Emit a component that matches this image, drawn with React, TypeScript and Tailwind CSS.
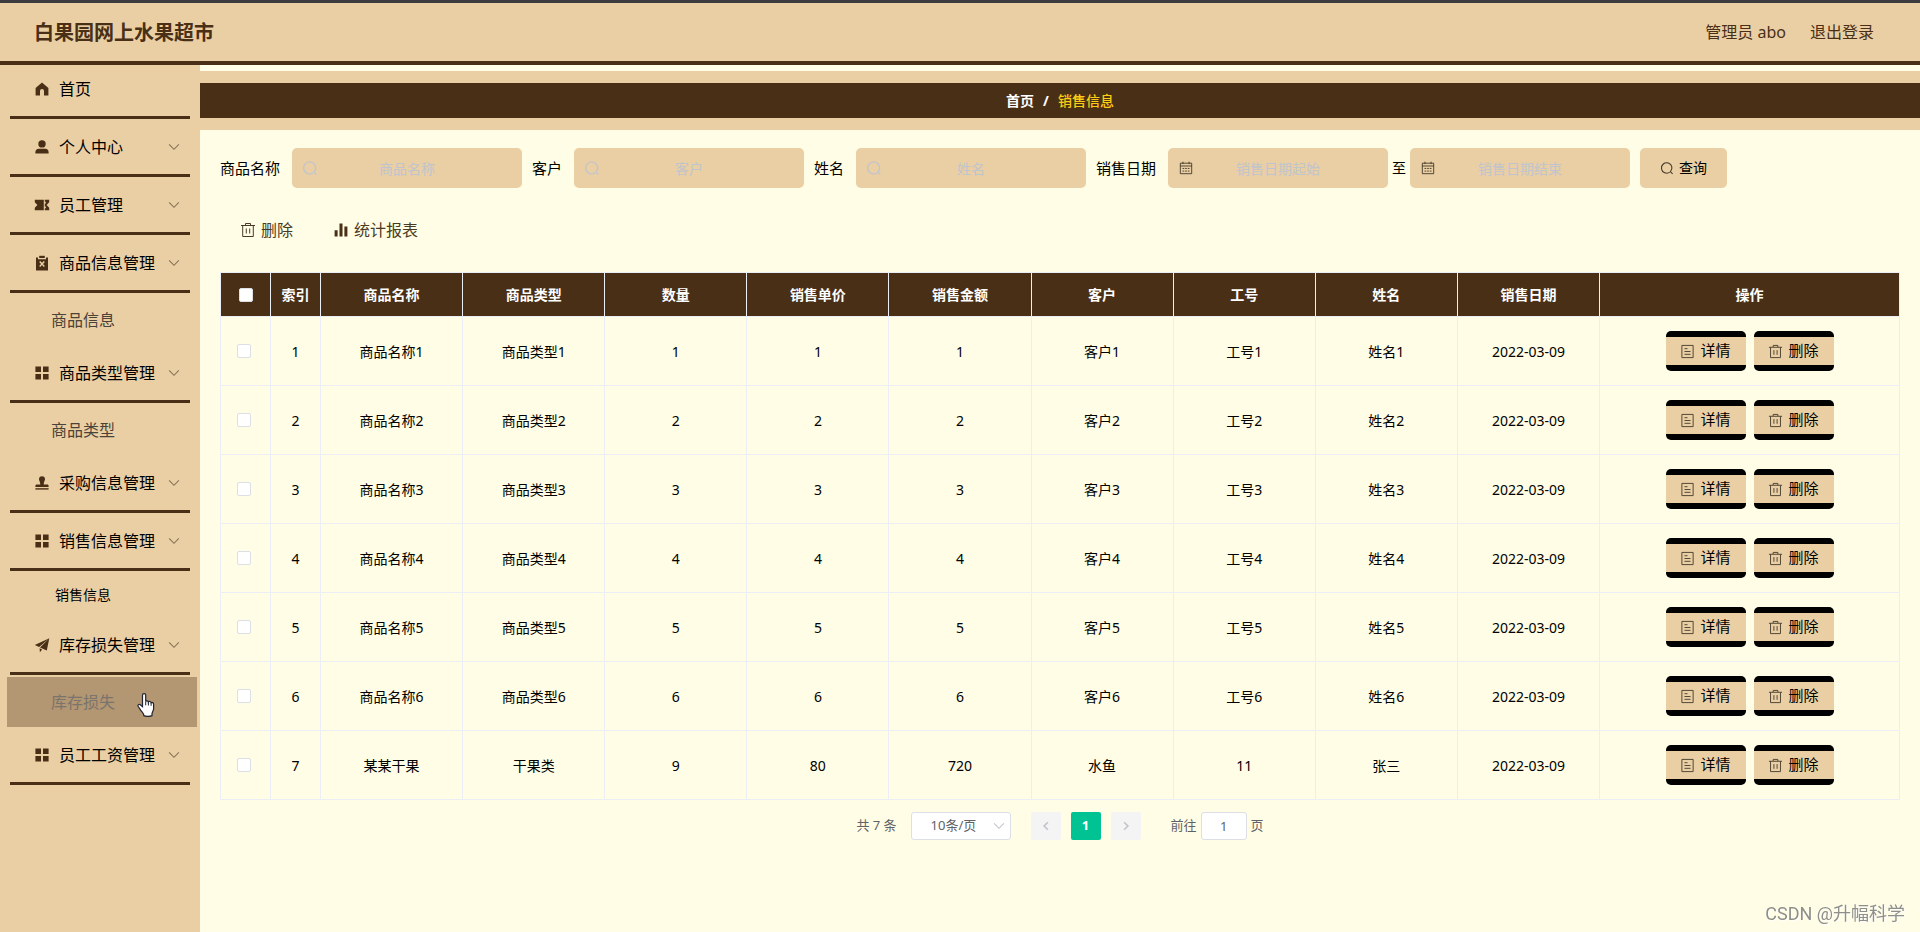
import { useState } from 'react'
import type { ReactNode } from 'react'
import clsx from 'clsx'

type IconProps = { className?: string }

function Icon({ className, children }: IconProps & { children: ReactNode }) {
  return (
    <svg viewBox="0 0 16 16" className={clsx('shrink-0', className)} fill="currentColor" aria-hidden>
      {children}
    </svg>
  )
}

const HomeIcon = (p: IconProps) => (
  <Icon {...p}>
    <path d="M8 1.600 14.400 7v7.400H10V10a2 2 0 0 0-4 0v4.400H1.600V7z" />
  </Icon>
)

const UserIcon = (p: IconProps) => (
  <Icon {...p}>
    <circle cx="8" cy="4.900" r="3.700" />
    <path d="M1.400 14.600v-1.400c0-2 1.300-3.400 3.300-3.400h6.600c2 0 3.300 1.400 3.300 3.400v1.400z" />
  </Icon>
)

const TicketIcon = (p: IconProps) => (
  <Icon {...p}>
    <path d="M.8 2.800h9v10.400h-9v-2.400L3.400 8 .8 5.200zM10.800 2.800h4.400v2.400L12.600 8l2.600 2.800v2.400h-4.400v-2h1V9.400h-1V6.600h1V4.800h-1z" />
  </Icon>
)

const ClaimIcon = (p: IconProps) => (
  <Icon {...p}>
    <path
      fillRule="evenodd"
      d="M2 2.400h2v1.800h8V2.400h2v13H2zM5.200 6.900 7 8.900l-1.800 2 1 1L8 10l1.800 1.900 1-1-1.800-2 1.800-2-1-1L8 7.800 6.200 5.900z"
    />
    <path d="M5.200.8h5.600v2.200H5.200z" />
  </Icon>
)

const MenuIcon = (p: IconProps) => (
  <Icon {...p}>
    <path d="M1.400 1.400h5.600v5.600H1.400zM9 1.400h5.600v5.600H9zM1.400 9H7v5.600H1.400zM9 9h5.600v5.600H9z" />
  </Icon>
)

const CheckStampIcon = (p: IconProps) => (
  <Icon {...p}>
    <path d="M8 1.200a3 3 0 0 1 3 3c0 1.600-1.200 2.600-1.200 4.400v.8h3.400c.8 0 1.400.6 1.400 1.400v1.200H1.400v-1.200c0-.8.6-1.400 1.400-1.400h3.400v-.8C6.200 6.800 5 5.800 5 4.200a3 3 0 0 1 3-3z" />
    <path d="M1.400 13.200h13.200v1.400H1.400z" />
  </Icon>
)

const PromotionIcon = (p: IconProps) => (
  <Icon {...p}>
    <path d="M15.300 1.200.8 7.900l4.300 2zM15.300 1.200 6 10.400l6.800 3.200zM5.600 11.300l2.500 1.200-2.200 2.700z" />
  </Icon>
)

const StatsIcon = (p: IconProps) => (
  <Icon {...p}>
    <path d="M1.600 8.200h3v6.400h-3zM6.500 1.400h3v13.200h-3zM11.400 4.400h3v10.200h-3z" />
  </Icon>
)

const TrashIcon = (p: IconProps) => (
  <Icon {...p}>
    <path d="M1 3.500h14M5.500 3.300V1.500h5v1.800M2.700 3.500v11h10.600v-11M6.300 6.500v5M9.700 6.500v5" fill="none" stroke="currentColor" />
  </Icon>
)

const DocumentIcon = (p: IconProps) => (
  <Icon {...p}>
    <path d="M2 1.500h12v13H2zM4.800 5H8M4.800 8h6.400M4.800 11h6.400" fill="none" stroke="currentColor" />
  </Icon>
)

const SearchIcon = (p: IconProps) => (
  <Icon {...p}>
    <path d="M11.900 12.200a6 6 0 1 0-.7.600M11.600 11.900l2.800 2.700" fill="none" stroke="currentColor" strokeWidth="1.200" />
  </Icon>
)

const CalendarIcon = (p: IconProps) => (
  <Icon {...p}>
    <path d="M1.500 2.500h13v12h-13zM1.500 5.700h13M4.500.8v2.700M11.500.8v2.700" fill="none" stroke="currentColor" />
    <path d="M4 8.500h8M4 11.500h8" fill="none" stroke="currentColor" strokeDasharray="2 1" />
  </Icon>
)

const ChevronDown = (p: IconProps) => (
  <Icon {...p}>
    <path d="m1.500 4.500 6.500 6.500 6.500-6.500" fill="none" stroke="currentColor" strokeWidth="1.400" />
  </Icon>
)

const ChevronLeft = (p: IconProps) => (
  <Icon {...p}>
    <path d="M10.500 3 5.500 8l5 5" fill="none" stroke="currentColor" strokeWidth="2.200" />
  </Icon>
)

const ChevronRight = (p: IconProps) => (
  <Icon {...p}>
    <path d="m5.500 3 5 5-5 5" fill="none" stroke="currentColor" strokeWidth="2.200" />
  </Icon>
)

type MenuGroup = {
  label: string
  icon: (p: IconProps) => ReactNode
  leaf?: boolean
  child?: { label: string; state?: 'active' | 'hover' }
}

const MENU: MenuGroup[] = [
  { label: '首页', icon: HomeIcon, leaf: true },
  { label: '个人中心', icon: UserIcon },
  { label: '员工管理', icon: TicketIcon },
  { label: '商品信息管理', icon: ClaimIcon, child: { label: '商品信息' } },
  { label: '商品类型管理', icon: MenuIcon, child: { label: '商品类型' } },
  { label: '采购信息管理', icon: CheckStampIcon },
  { label: '销售信息管理', icon: MenuIcon, child: { label: '销售信息', state: 'active' } },
  { label: '库存损失管理', icon: PromotionIcon, child: { label: '库存损失', state: 'hover' } },
  { label: '员工工资管理', icon: MenuIcon },
]

const COLUMNS = ['商品名称', '商品类型', '数量', '销售单价', '销售金额', '客户', '工号', '姓名', '销售日期']

const ROWS = [
  ...[1, 2, 3, 4, 5, 6].map((n) => [
    `商品名称${n}`,
    `商品类型${n}`,
    `${n}`,
    `${n}`,
    `${n}`,
    `客户${n}`,
    `工号${n}`,
    `姓名${n}`,
    '2022-03-09',
  ]),
  ['某某干果', '干果类', '9', '80', '720', '水鱼', '11', '张三', '2022-03-09'],
]

function HandCursor() {
  return (
    <svg viewBox="0 0 18 24" className="absolute left-[130px] top-[18px] h-6 w-[18px]" aria-hidden>
      <path
        d="M5.500 2.200a1.600 1.600 0 0 1 3.200 0v6.300c.4-1 2.600-.8 2.700.5.600-.9 2.500-.6 2.700.7.800-.6 2.500-.2 2.500 1.500v4.600c0 2-1.600 3.300-1.600 5v1.800c-2 1.100-6.200 1.100-8.200 0 0-2.300-1.700-3.300-3-5.300L1.300 13.500c-1-1.600.7-2.800 2-1.800l2.200 2z"
        fill="#fff"
        stroke="#1f2430"
        strokeWidth="1.200"
      />
      <path d="M8.700 8.500v3.800M11.400 9v3.500M14.100 9.800v3" stroke="#1f2430" />
    </svg>
  )
}

function Sidebar() {
  return (
    <nav className="-mt-1 w-[200px] shrink-0 bg-[#eacfa4]">
      {MENU.map(({ label, icon: ItemIcon, leaf, child }) => (
        <div key={label}>
          <a
            href="#"
            className="mx-2.5 flex h-[58px] items-center border-b-3 border-[#4a2f17] pl-6 pr-2.5 text-base text-black"
          >
            <ItemIcon className="mr-[9px] size-4 text-[#4a2f17]" />
            {label}
            {!leaf && <ChevronDown className="ml-auto size-3 text-[#857352]" />}
          </a>
          {child && (
            <div className="relative ml-[7px] mr-[3px] pt-0.5">
              <a
                href="#"
                className={clsx(
                  'flex items-center pl-11',
                  child.state === 'active' ? 'h-11 text-sm text-black' : 'h-[50px] text-base',
                  child.state === 'hover' && 'bg-[#b39672] text-[#7a746c]',
                  !child.state && 'text-[#4b4338]',
                )}
              >
                <span className="w-16 text-center">{child.label}</span>
              </a>
              {child.state === 'hover' && <HandCursor />}
            </div>
          )}
        </div>
      ))}
    </nav>
  )
}

function Field({ id, label, placeholder, date }: { id: string; label?: string; placeholder: string; date?: boolean }) {
  return (
    <div className="flex items-center">
      {label && (
        <label htmlFor={id} className="pr-3 text-[15px] text-black">
          {label}
        </label>
      )}
      <div className="relative">
        {date ? (
          <CalendarIcon className="absolute left-[11px] top-[13px] size-3.5 text-[#3f3526]" />
        ) : (
          <SearchIcon className="absolute left-2.5 top-3 size-4 text-[#c0c4cc]" />
        )}
        <input
          id={id}
          type="text"
          aria-label={placeholder}
          placeholder={placeholder}
          className={clsx(
            'h-10 rounded-[5px] bg-[#eacfa4] px-[30px] text-center text-sm text-black outline-none placeholder:text-[#c0c4cc]',
            date ? 'w-[220px]' : 'w-[230px]',
          )}
        />
      </div>
    </div>
  )
}

function SearchForm() {
  return (
    <form className="flex flex-wrap items-center gap-2.5" onSubmit={(e) => e.preventDefault()}>
      <Field id="goods" label="商品名称" placeholder="商品名称" />
      <Field id="customer" label="客户" placeholder="客户" />
      <Field id="name" label="姓名" placeholder="姓名" />
      <div className="flex items-center gap-1">
        <Field id="from" label="销售日期" placeholder="销售日期起始" date />
        <span className="text-sm text-black">至</span>
        <Field id="to" placeholder="销售日期结束" date />
      </div>
      <button type="submit" className="flex h-10 items-center gap-[5px] rounded-[5px] bg-[#eacfa4] px-5 text-sm text-black">
        <SearchIcon className="size-3.5 text-[#3f3526]" />
        查询
      </button>
    </form>
  )
}

function RowButton({ icon, children }: { icon: ReactNode; children: ReactNode }) {
  return (
    <button
      type="button"
      className="flex h-10 w-20 items-center justify-center gap-[5px] rounded-[5px] border-y-6 border-black bg-[#eacfa4] text-[15px] text-black"
    >
      {icon}
      {children}
    </button>
  )
}

const checkboxClass =
  'mx-auto block size-3.5 appearance-none rounded-xs border border-[#dcdfe6] bg-white checked:bg-[#00c292]'

function SalesTable() {
  const [checked, setChecked] = useState<number[]>([])
  const toggle = (i: number) =>
    setChecked((prev) => (prev.includes(i) ? prev.filter((n) => n !== i) : [...prev, i]))

  return (
    <table className="w-full table-fixed border-collapse text-center text-sm text-black">
      <colgroup>
        <col className="w-[50px]" />
        <col className="w-[50px]" />
        {COLUMNS.map((c) => (
          <col key={c} />
        ))}
        <col className="w-[300px]" />
      </colgroup>
      <thead>
        <tr className="h-11 bg-[#4a2f17] text-white">
          <th className="border border-[#ebeef5]">
            <input
              type="checkbox"
              aria-label="全选"
              className={checkboxClass}
              checked={checked.length === ROWS.length}
              onChange={(e) => setChecked(e.target.checked ? ROWS.map((_, i) => i) : [])}
            />
          </th>
          {['索引', ...COLUMNS, '操作'].map((c) => (
            <th key={c} className="border border-[#ebeef5] font-bold">
              {c}
            </th>
          ))}
        </tr>
      </thead>
      <tbody>
        {ROWS.map((row, i) => (
          <tr key={i} className="h-[69px]">
            <td className="border border-[#ebeef5] pr-1">
              <input
                type="checkbox"
                aria-label={`选择 ${i + 1}`}
                className={checkboxClass}
                checked={checked.includes(i)}
                onChange={() => toggle(i)}
              />
            </td>
            <td className="border border-[#ebeef5] pt-0.5">{i + 1}</td>
            {row.map((cell, j) => (
              <td key={j} className="border border-[#ebeef5] pt-0.5">
                {cell}
              </td>
            ))}
            <td className="border border-[#ebeef5]">
              <div className="flex justify-center gap-2">
                <RowButton icon={<DocumentIcon className="size-[15px] text-[#4b4030]" />}>详情</RowButton>
                <RowButton icon={<TrashIcon className="size-[15px] text-[#4b4030]" />}>删除</RowButton>
              </div>
            </td>
          </tr>
        ))}
      </tbody>
    </table>
  )
}

function Pagination() {
  return (
    <div className="mt-3 flex items-center justify-center text-[13px] text-[#606266]">
      <span className="mr-3.5">共 7 条</span>
      <div className="relative mr-5">
        <select
          aria-label="每页条数"
          className="h-7 w-[100px] appearance-none rounded-[3px] border border-[#dcdfe6] bg-white pl-[19px] outline-none"
        >
          <option>10条/页</option>
          <option>20条/页</option>
        </select>
        <ChevronDown className="pointer-events-none absolute right-1.5 top-2 size-3 text-[#c0c4cc]" />
      </div>
      <div className="mr-[30px] flex gap-2.5">
        <button type="button" aria-label="上一页" className="flex h-7 w-[30px] items-center justify-center rounded-xs bg-[#f4f4f5] text-[#c0c4cc]">
          <ChevronLeft className="size-3" />
        </button>
        <button type="button" className="h-7 w-[30px] rounded-xs bg-[#00c292] font-bold text-white">
          1
        </button>
        <button type="button" aria-label="下一页" className="flex h-7 w-[30px] items-center justify-center rounded-xs bg-[#f4f4f5] text-[#c0c4cc]">
          <ChevronRight className="size-3" />
        </button>
      </div>
      <label className="flex items-center gap-1">
        前往
        <input
          type="text"
          defaultValue="1"
          className="h-7 w-[46px] rounded-[3px] border border-[#dcdfe6] bg-white text-center outline-none"
        />
        页
      </label>
    </div>
  )
}

export default function App() {
  return (
    <div className="flex min-h-screen flex-col bg-[#fffde5] font-['Noto_Sans','Noto_Sans_CJK_SC',sans-serif]">
      <header className="relative z-10 flex h-[65px] items-center justify-between border-b-4 border-t-3 border-b-[#4a2f17] border-t-[#3c3c3e] bg-[#eacfa4] pl-[34px] pr-[46px] text-[#4a2f17]">
        <h1 className="pt-0.5 text-xl font-bold">白果园网上水果超市</h1>
        <div className="flex gap-6 text-base">
          <span>管理员 abo</span>
          <a href="#">退出登录</a>
        </div>
      </header>

      <div className="flex flex-1">
        <Sidebar />
        <main className="min-w-0 flex-1 pt-1.5">
          <div className="flex h-[59px] items-center justify-center gap-[9px] border-y-12 border-[#eacfa4] bg-[#4a2f17] text-sm font-bold text-white">
            <a href="#">首页</a>
            <span>/</span>
            <span className="font-medium text-[#fbcd13]">销售信息</span>
          </div>

          <div className="px-5 pt-[18px]">
            <SearchForm />
            <div className="my-[22px] flex h-10 items-center gap-10 px-5 text-base text-[#4a3a24]">
              <button type="button" className="flex items-center gap-[5px]">
                <TrashIcon className="size-4" />
                删除
              </button>
              <button type="button" className="flex items-center gap-[5px]">
                <StatsIcon className="size-4 text-[#4a2f17]" />
                统计报表
              </button>
            </div>
            <SalesTable />
            <Pagination />
          </div>
        </main>
      </div>

      <div className="fixed bottom-1 right-[15px] font-[Roboto,'Noto_Sans_CJK_SC',sans-serif] text-lg leading-7 text-[#8f8f8a] [text-shadow:1px_1px_1px_#fff]">
        CSDN @升幅科学
      </div>
    </div>
  )
}
